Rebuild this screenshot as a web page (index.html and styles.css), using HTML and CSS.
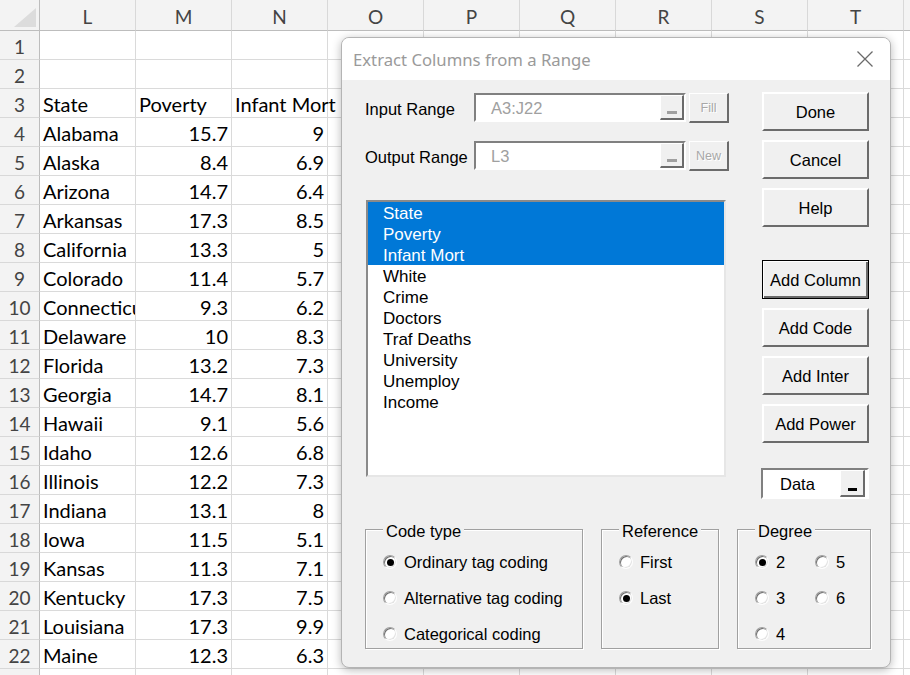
FILE: index.html
```html
<!DOCTYPE html>
<html>
<head>
<meta charset="utf-8">
<title>Extract Columns from a Range</title>
<link rel="stylesheet" href="styles.css">
</head>
<body>
<div class="sheet">
  <div class="corner"><svg width="22" height="19" viewBox="0 0 22 19"><polygon points="22,0 22,19 0,19" fill="#dcdcdc"/></svg></div>
  <div class="ch">L</div><div class="ch">M</div><div class="ch">N</div><div class="ch">O</div><div class="ch">P</div><div class="ch">Q</div><div class="ch">R</div><div class="ch">S</div><div class="ch">T</div><div class="ch"></div>

  <div class="rh">1</div><div></div><div></div><div></div><div></div><div></div><div></div><div></div><div></div><div></div><div></div>
  <div class="rh">2</div><div></div><div></div><div></div><div></div><div></div><div></div><div></div><div></div><div></div><div></div>
  <div class="rh">3</div><div>State</div><div>Poverty</div><div class="ov">Infant Mort</div><div></div><div></div><div></div><div></div><div></div><div></div><div></div>
  <div class="rh">4</div><div>Alabama</div><div class="n">15.7</div><div class="n">9</div><div></div><div></div><div></div><div></div><div></div><div></div><div></div>
  <div class="rh">5</div><div>Alaska</div><div class="n">8.4</div><div class="n">6.9</div><div></div><div></div><div></div><div></div><div></div><div></div><div></div>
  <div class="rh">6</div><div>Arizona</div><div class="n">14.7</div><div class="n">6.4</div><div></div><div></div><div></div><div></div><div></div><div></div><div></div>
  <div class="rh">7</div><div>Arkansas</div><div class="n">17.3</div><div class="n">8.5</div><div></div><div></div><div></div><div></div><div></div><div></div><div></div>
  <div class="rh">8</div><div>California</div><div class="n">13.3</div><div class="n">5</div><div></div><div></div><div></div><div></div><div></div><div></div><div></div>
  <div class="rh">9</div><div>Colorado</div><div class="n">11.4</div><div class="n">5.7</div><div></div><div></div><div></div><div></div><div></div><div></div><div></div>
  <div class="rh">10</div><div>Connecticut</div><div class="n">9.3</div><div class="n">6.2</div><div></div><div></div><div></div><div></div><div></div><div></div><div></div>
  <div class="rh">11</div><div>Delaware</div><div class="n">10</div><div class="n">8.3</div><div></div><div></div><div></div><div></div><div></div><div></div><div></div>
  <div class="rh">12</div><div>Florida</div><div class="n">13.2</div><div class="n">7.3</div><div></div><div></div><div></div><div></div><div></div><div></div><div></div>
  <div class="rh">13</div><div>Georgia</div><div class="n">14.7</div><div class="n">8.1</div><div></div><div></div><div></div><div></div><div></div><div></div><div></div>
  <div class="rh">14</div><div>Hawaii</div><div class="n">9.1</div><div class="n">5.6</div><div></div><div></div><div></div><div></div><div></div><div></div><div></div>
  <div class="rh">15</div><div>Idaho</div><div class="n">12.6</div><div class="n">6.8</div><div></div><div></div><div></div><div></div><div></div><div></div><div></div>
  <div class="rh">16</div><div>Illinois</div><div class="n">12.2</div><div class="n">7.3</div><div></div><div></div><div></div><div></div><div></div><div></div><div></div>
  <div class="rh">17</div><div>Indiana</div><div class="n">13.1</div><div class="n">8</div><div></div><div></div><div></div><div></div><div></div><div></div><div></div>
  <div class="rh">18</div><div>Iowa</div><div class="n">11.5</div><div class="n">5.1</div><div></div><div></div><div></div><div></div><div></div><div></div><div></div>
  <div class="rh">19</div><div>Kansas</div><div class="n">11.3</div><div class="n">7.1</div><div></div><div></div><div></div><div></div><div></div><div></div><div></div>
  <div class="rh">20</div><div>Kentucky</div><div class="n">17.3</div><div class="n">7.5</div><div></div><div></div><div></div><div></div><div></div><div></div><div></div>
  <div class="rh">21</div><div>Louisiana</div><div class="n">17.3</div><div class="n">9.9</div><div></div><div></div><div></div><div></div><div></div><div></div><div></div>
  <div class="rh">22</div><div>Maine</div><div class="n">12.3</div><div class="n">6.3</div><div></div><div></div><div></div><div></div><div></div><div></div><div></div>
  <div class="rh"></div><div></div><div></div><div></div><div></div><div></div><div></div><div></div><div></div><div></div><div></div>
</div>

<div class="dialog">
  <div class="titlebar">
    <span class="title">Extract Columns from a Range</span>
    <svg class="close" width="16" height="16" viewBox="0 0 16 16"><path d="M0.5 0.5L15.5 15.5M15.5 0.5L0.5 15.5" stroke="#6a6a6a" stroke-width="1.3" fill="none"/></svg>
  </div>
  <div class="body">
    <div class="top">
      <div class="leftcol">
        <div class="range-row">
          <span class="lbl">Input Range</span>
          <div class="field"><span class="val">A3:J22</span><span class="dots"><i></i></span></div>
          <span class="mini">Fill</span>
        </div>
        <div class="range-row">
          <span class="lbl">Output Range</span>
          <div class="field"><span class="val">L3</span><span class="dots"><i></i></span></div>
          <span class="mini">New</span>
        </div>
        <div class="listbox">
          <div class="item sel">State</div>
          <div class="item sel">Poverty</div>
          <div class="item sel">Infant Mort</div>
          <div class="item">White</div>
          <div class="item">Crime</div>
          <div class="item">Doctors</div>
          <div class="item">Traf Deaths</div>
          <div class="item">University</div>
          <div class="item">Unemploy</div>
          <div class="item">Income</div>
        </div>
      </div>
      <div class="rightcol">
        <div class="btn">Done</div>
        <div class="btn">Cancel</div>
        <div class="btn">Help</div>
        <div class="btn default sep">Add Column</div>
        <div class="btn">Add Code</div>
        <div class="btn">Add Inter</div>
        <div class="btn">Add Power</div>
        <div class="combo"><span class="combo-val">Data</span><span class="dots dark"><i></i></span></div>
      </div>
    </div>
    <div class="frames">
      <div class="frame code">
        <span class="legend">Code type</span>
        <div class="radios">
          <div class="radio checked"><span class="dot"></span>Ordinary tag coding</div>
          <div class="radio"><span class="dot"></span>Alternative tag coding</div>
          <div class="radio"><span class="dot"></span>Categorical coding</div>
        </div>
      </div>
      <div class="frame ref">
        <span class="legend">Reference</span>
        <div class="radios">
          <div class="radio"><span class="dot"></span>First</div>
          <div class="radio checked"><span class="dot"></span>Last</div>
        </div>
      </div>
      <div class="frame deg">
        <span class="legend">Degree</span>
        <div class="radios grid2">
          <div class="radio checked"><span class="dot"></span>2</div>
          <div class="radio"><span class="dot"></span>5</div>
          <div class="radio"><span class="dot"></span>3</div>
          <div class="radio"><span class="dot"></span>6</div>
          <div class="radio"><span class="dot"></span>4</div>
        </div>
      </div>
    </div>
  </div>
</div>
</body>
</html>
```

FILE: styles.css
```css
html, body {
  margin: 0;
  padding: 0;
}
body {
  width: 910px;
  height: 675px;
  overflow: hidden;
  position: relative;
  background: #fff;
  font-family: "Liberation Sans", Arial, sans-serif;
}

/* ---------- spreadsheet ---------- */
.sheet {
  display: grid;
  grid-template-columns: 40px repeat(10, 96px);
  grid-template-rows: 31px;
  grid-auto-rows: 29px;
  font-family: Lato, "Liberation Sans", sans-serif;
  font-size: 20px;
  color: #000;
}
.sheet > div {
  box-sizing: border-box;
  border-right: 1px solid #dadada;
  border-bottom: 1px solid #dadada;
  white-space: nowrap;
  overflow: hidden;
  display: flex;
  align-items: center;
  padding: 2px 3px 0 3px;
}
.sheet > .ch {
  background: #f3f3f3;
  justify-content: center;
  color: #444;
  border-bottom-color: #bdbdbd;
  border-right-color: #d8d8d8;
  font-size: 19px;
}
.sheet > .rh {
  background: #f3f3f3;
  justify-content: center;
  color: #444;
  border-right-color: #bdbdbd;
  border-bottom-color: #d8d8d8;
  font-size: 19px;
}
.sheet > .corner {
  background: #f3f3f3;
  border-right-color: #bdbdbd;
  border-bottom-color: #bdbdbd;
  justify-content: flex-end;
  align-items: flex-end;
  padding: 0 3px 3px 0;
}
.sheet > .n {
  justify-content: flex-end;
}
.sheet > .ov {
  overflow: visible;
}

/* ---------- dialog ---------- */
.dialog {
  position: absolute;
  left: 341px;
  top: 37px;
  width: 550px;
  height: 631px;
  box-sizing: border-box;
  border: 1px solid #b4b4b4;
  border-radius: 8px;
  overflow: hidden;
  background: #f0f0f0;
  box-shadow: 0 2px 10px rgba(0, 0, 0, 0.28);
  display: flex;
  flex-direction: column;
  font-family: "Liberation Sans", Arial, sans-serif;
  font-size: 16.5px;
  color: #000;
}
.titlebar {
  height: 42px;
  flex: none;
  background: #fff;
  display: flex;
  align-items: center;
  justify-content: space-between;
  padding: 0 17px 0 11px;
}
.title {
  font-family: "Noto Sans", sans-serif;
  font-size: 16.7px;
  color: #9a9a9a;
}
.close {
  display: block;
}
.body {
  flex: 1;
  padding: 12px 0 0 23px;
  display: flex;
  flex-direction: column;
}
.top {
  display: flex;
  gap: 33px;
}
.leftcol {
  width: 364px;
  padding-top: 1px;
  display: flex;
  flex-direction: column;
}
.range-row {
  display: flex;
  align-items: flex-start;
  height: 30px;
}
.range-row + .range-row {
  margin-top: 18px;
}
.lbl {
  width: 109px;
  line-height: 32px;
}
.field {
  width: 212px;
  height: 29px;
  box-sizing: border-box;
  border: 2px solid;
  border-color: #808080 #fff #fff #808080;
  background: #fff;
  display: flex;
  align-items: center;
  justify-content: space-between;
}
.val {
  color: #a0a0a0;
  padding-left: 15px;
  padding-top: 2px;
}
.dots {
  width: 24px;
  height: 25px;
  box-sizing: border-box;
  border-style: solid;
  border-width: 1px 2px 2px 1px;
  border-color: #fff #6b6b6b #6b6b6b #fff;
  background: #f0f0f0;
  display: flex;
  justify-content: center;
  align-items: flex-end;
  padding-bottom: 4px;
}
.dots i {
  display: block;
  width: 10px;
  height: 3px;
  background: #a0a0a0;
}
.dots.dark i {
  background: #000;
  width: 9px;
}
.mini {
  margin-left: 3px;
  width: 40px;
  height: 30px;
  box-sizing: border-box;
  border-style: solid;
  border-width: 1px 2px 2px 1px;
  border-color: #fff #6b6b6b #6b6b6b #fff;
  display: flex;
  align-items: center;
  justify-content: center;
  font-size: 12.5px;
  color: #a8a8a8;
  text-shadow: 1px 1px 0 #fff;
}
.listbox {
  margin: 29px 0 0 1px;
  width: 360px;
  height: 277px;
  box-sizing: border-box;
  border: 2px solid;
  border-color: #8a8a8a #e6e6e6 #e6e6e6 #8a8a8a;
  background: #fff;
}
.item {
  height: 21px;
  line-height: 24px;
  padding-left: 15px;
  font-size: 17px;
}
.item.sel {
  background: #0078d7;
  color: #fff;
}
.rightcol {
  width: 107px;
  display: flex;
  flex-direction: column;
  gap: 9px;
}
.btn {
  height: 39px;
  box-sizing: border-box;
  border-style: solid;
  border-width: 2px;
  border-color: #fff #6b6b6b #6b6b6b #fff;
  display: flex;
  align-items: center;
  justify-content: center;
  padding-top: 2px;
}
.btn.sep {
  margin-top: 24px;
}
.btn.default {
  border: 1px solid #000;
  box-shadow: inset 1px 1px 0 #fff, inset -2px -2px 0 #6b6b6b;
}
.combo {
  margin-top: 16px;
  margin-left: -1px;
  width: 108px;
  height: 31px;
  box-sizing: border-box;
  border: 2px solid;
  border-color: #808080 #fff #fff #808080;
  background: #fff;
  display: flex;
  align-items: center;
  justify-content: space-between;
}
.combo-val {
  padding-left: 17px;
  padding-top: 2px;
}
.combo .dots {
  width: 25px;
  height: 27px;
  margin-right: 2px;
}

/* ---------- frames ---------- */
.frames {
  display: flex;
  gap: 18px;
  margin-top: 30px;
}
.frame {
  height: 120px;
  box-sizing: border-box;
  border: 1px solid #a0a0a0;
  box-shadow: 1px 1px 0 #fff, inset 1px 1px 0 #fff;
  display: flex;
  flex-direction: column;
}
.frame.code { width: 218px; }
.frame.ref { width: 118px; }
.frame.deg { width: 134px; }
.legend {
  align-self: flex-start;
  margin: -10px 0 0 17px;
  padding: 0 3px;
  line-height: 22px;
  height: 20px;
  background: #f0f0f0;
}
.radios {
  padding: 4px 0 0 17px;
}
.radios.grid2 {
  display: grid;
  grid-template-columns: 60px auto;
}
.radio {
  height: 36px;
  display: flex;
  align-items: center;
  gap: 7px;
  white-space: nowrap;
}
.dot {
  width: 14px;
  height: 14px;
  box-sizing: border-box;
  border-radius: 50%;
  border: 1px solid;
  border-color: #a0a0a0 #fdfdfd #fdfdfd #a0a0a0;
  background: #fff;
  box-shadow: inset 1px 1px 0 #6e6e6e, inset -1px -1px 0 #e3e3e3;
  display: flex;
  align-items: center;
  justify-content: center;
  flex: none;
}
.radio.checked .dot::after {
  content: "";
  width: 7px;
  height: 7px;
  border-radius: 50%;
  background: #000;
}
```
